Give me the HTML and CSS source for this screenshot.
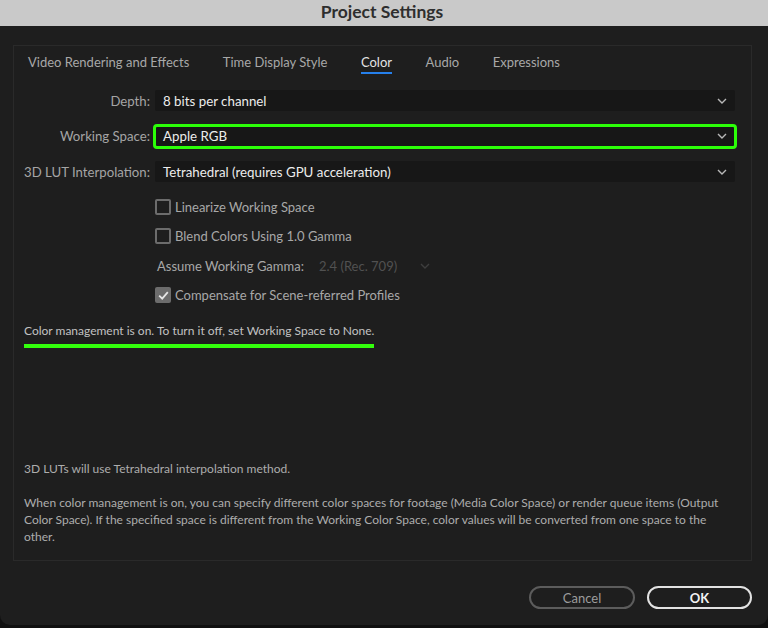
FILE: index.html
```html
<!DOCTYPE html>
<html lang="en">
<head>
  <meta charset="UTF-8">
  <title>Project Settings</title>
  <link rel="stylesheet" href="styles.css">
</head>
<body>

  <div class="okno">
    <div class="tytul">Project Settings</div>

    <div class="tresc">
      <div class="panel">

        <div class="zakladki">
          <span class="zakladka">Video Rendering and Effects</span>
          <span class="zakladka">Time Display Style</span>
          <span class="zakladka aktywna">Color</span>
          <span class="zakladka">Audio</span>
          <span class="zakladka">Expressions</span>
        </div>

        <div class="formularz">
          <div class="wiersz">
            <span class="etykieta">Depth:</span>
            <div class="lista">
              <span>8 bits per channel</span>
              <svg class="strzalka" width="10" height="6" viewBox="0 0 10 6"><path d="M1 1l4 4 4-4" fill="none" stroke="#b8b8b8" stroke-width="1.4"/></svg>
            </div>
          </div>
          <div class="wiersz">
            <span class="etykieta">Working Space:</span>
            <div class="lista zaznaczona">
              <span>Apple RGB</span>
              <svg class="strzalka" width="10" height="6" viewBox="0 0 10 6"><path d="M1 1l4 4 4-4" fill="none" stroke="#b8b8b8" stroke-width="1.4"/></svg>
            </div>
          </div>
          <div class="wiersz">
            <span class="etykieta">3D LUT Interpolation:</span>
            <div class="lista">
              <span>Tetrahedral (requires GPU acceleration)</span>
              <svg class="strzalka" width="10" height="6" viewBox="0 0 10 6"><path d="M1 1l4 4 4-4" fill="none" stroke="#b8b8b8" stroke-width="1.4"/></svg>
            </div>
          </div>
        </div>

        <div class="opcje">
          <div class="opcja"><span class="pole"></span>Linearize Working Space</div>
          <div class="opcja"><span class="pole"></span>Blend Colors Using 1.0 Gamma</div>
          <div class="opcja gamma">
            <span class="etykieta-gamma">Assume Working Gamma:</span>
            <span class="wartosc-gamma">2.4 (Rec. 709)</span>
            <svg width="10" height="6" viewBox="0 0 10 6"><path d="M1 1l4 4 4-4" fill="none" stroke="#3e3e3e" stroke-width="1.4"/></svg>
          </div>
          <div class="opcja">
            <span class="pole wlaczone">
              <svg width="11" height="9" viewBox="0 0 11 9"><path d="M1.2 4.6l3 3 5.6-6.4" fill="none" stroke="#e6e6e6" stroke-width="1.8"/></svg>
            </span>
            Compensate for Scene-referred Profiles
          </div>
        </div>

        <p class="komunikat">Color management is on. To turn it off, set Working Space to None.</p>
        <div class="podkreslenie"></div>

        <div class="odstep"></div>

        <p class="uwaga">3D LUTs will use Tetrahedral interpolation method.</p>
        <p class="uwaga opis">When color management is on, you can specify different color spaces for footage (Media Color Space) or render queue items (Output Color Space). If the specified space is different from the Working Color Space, color values will be converted from one space to the other.</p>
      </div>

      <div class="przyciski">
        <button class="przycisk">Cancel</button>
        <button class="przycisk ok">OK</button>
      </div>
    </div>
  </div>

</body>
</html>
```

FILE: styles.css
```css
body {
  margin: 0;
  background: #101010;
  font-family: Lato, 'Noto Sans', sans-serif;
  height: 628px;
  overflow: hidden;
}

.okno {
  height: 625px;
  display: flex;
  flex-direction: column;
  background: #1e1e1e;
  border-radius: 0 0 10px 10px;
  overflow: hidden;
}

.tytul {
  height: 26px;
  line-height: 23px;
  background: #c9c9c9;
  color: #2e2e2e;
  font-weight: bold;
  font-size: 17.5px;
  text-align: center;
  padding-right: 4px;
}

.tresc {
  flex: 1;
  display: flex;
  flex-direction: column;
  padding: 19px 16px 0 13px;
}

.panel {
  height: 514px;
  border: 1px solid #2a2a2a;
  display: flex;
  flex-direction: column;
  padding: 0 16px 0 10px;
}

.zakladki {
  display: flex;
  gap: 33.5px;
  padding: 7px 0 0 4px;
}

.zakladka {
  font-size: 13px;
  line-height: 18px;
  color: #a8a8a8;
  padding-bottom: 1px;
  border-bottom: 2px solid transparent;
}

.zakladka.aktywna {
  color: #e4e4e4;
  border-bottom-color: #2680eb;
}

.formularz {
  margin-top: 16px;
  display: flex;
  flex-direction: column;
  gap: 14.5px;
}

.wiersz {
  display: grid;
  grid-template-columns: 126px 1fr;
  column-gap: 5px;
  align-items: center;
}

.etykieta {
  text-align: right;
  white-space: nowrap;
  font-size: 13.2px;
  color: #a5a5a5;
}

.lista {
  height: 21px;
  background: #171717;
  border-radius: 2px;
  display: flex;
  align-items: center;
  justify-content: space-between;
  padding: 0 8px 0 8px;
  font-size: 13.3px;
  color: #ececec;
}

.lista.zaznaczona {
  outline: 3px solid #2cff08;
  outline-offset: -1px;
}

.opcje {
  margin: 10px 0 0 131px;
  display: flex;
  flex-direction: column;
}

.opcja {
  height: 29.5px;
  display: flex;
  align-items: center;
  gap: 4px;
  font-size: 13px;
  color: #a8a8a8;
}

.pole {
  width: 12px;
  height: 12px;
  border: 2px solid #6c6c6c;
  border-radius: 2px;
  display: flex;
  align-items: center;
  justify-content: center;
}

.pole.wlaczone {
  background: #6c6c6c;
}

.gamma {
  padding-left: 2px;
  gap: 0;
}

.wartosc-gamma {
  margin-left: 15px;
  width: 101px;
  color: #515151;
}

.komunikat {
  margin: 13px 0 0 0;
  font-size: 12px;
  line-height: 16px;
  color: #c2c2c2;
}

.podkreslenie {
  margin-top: 5px;
  width: 350px;
  height: 4px;
  background: #33ff0c;
}

.odstep {
  flex: 1;
}

.uwaga {
  margin: 0;
  font-size: 12px;
  line-height: 17px;
  color: #adadad;
}

.opis {
  margin: 17px 0 15px 0;
}

.przyciski {
  display: flex;
  justify-content: flex-end;
  gap: 12px;
  margin-top: 25px;
}

.przycisk {
  width: 106px;
  height: 23px;
  border-radius: 12px;
  background: transparent;
  border: 2px solid #5c5c5c;
  color: #9c9c9c;
  font-family: Lato, sans-serif;
  font-size: 13px;
  cursor: pointer;
}

.przycisk.ok {
  width: 105px;
  border-color: #e2e2e2;
  color: #f2f2f2;
  font-weight: bold;
}
```
